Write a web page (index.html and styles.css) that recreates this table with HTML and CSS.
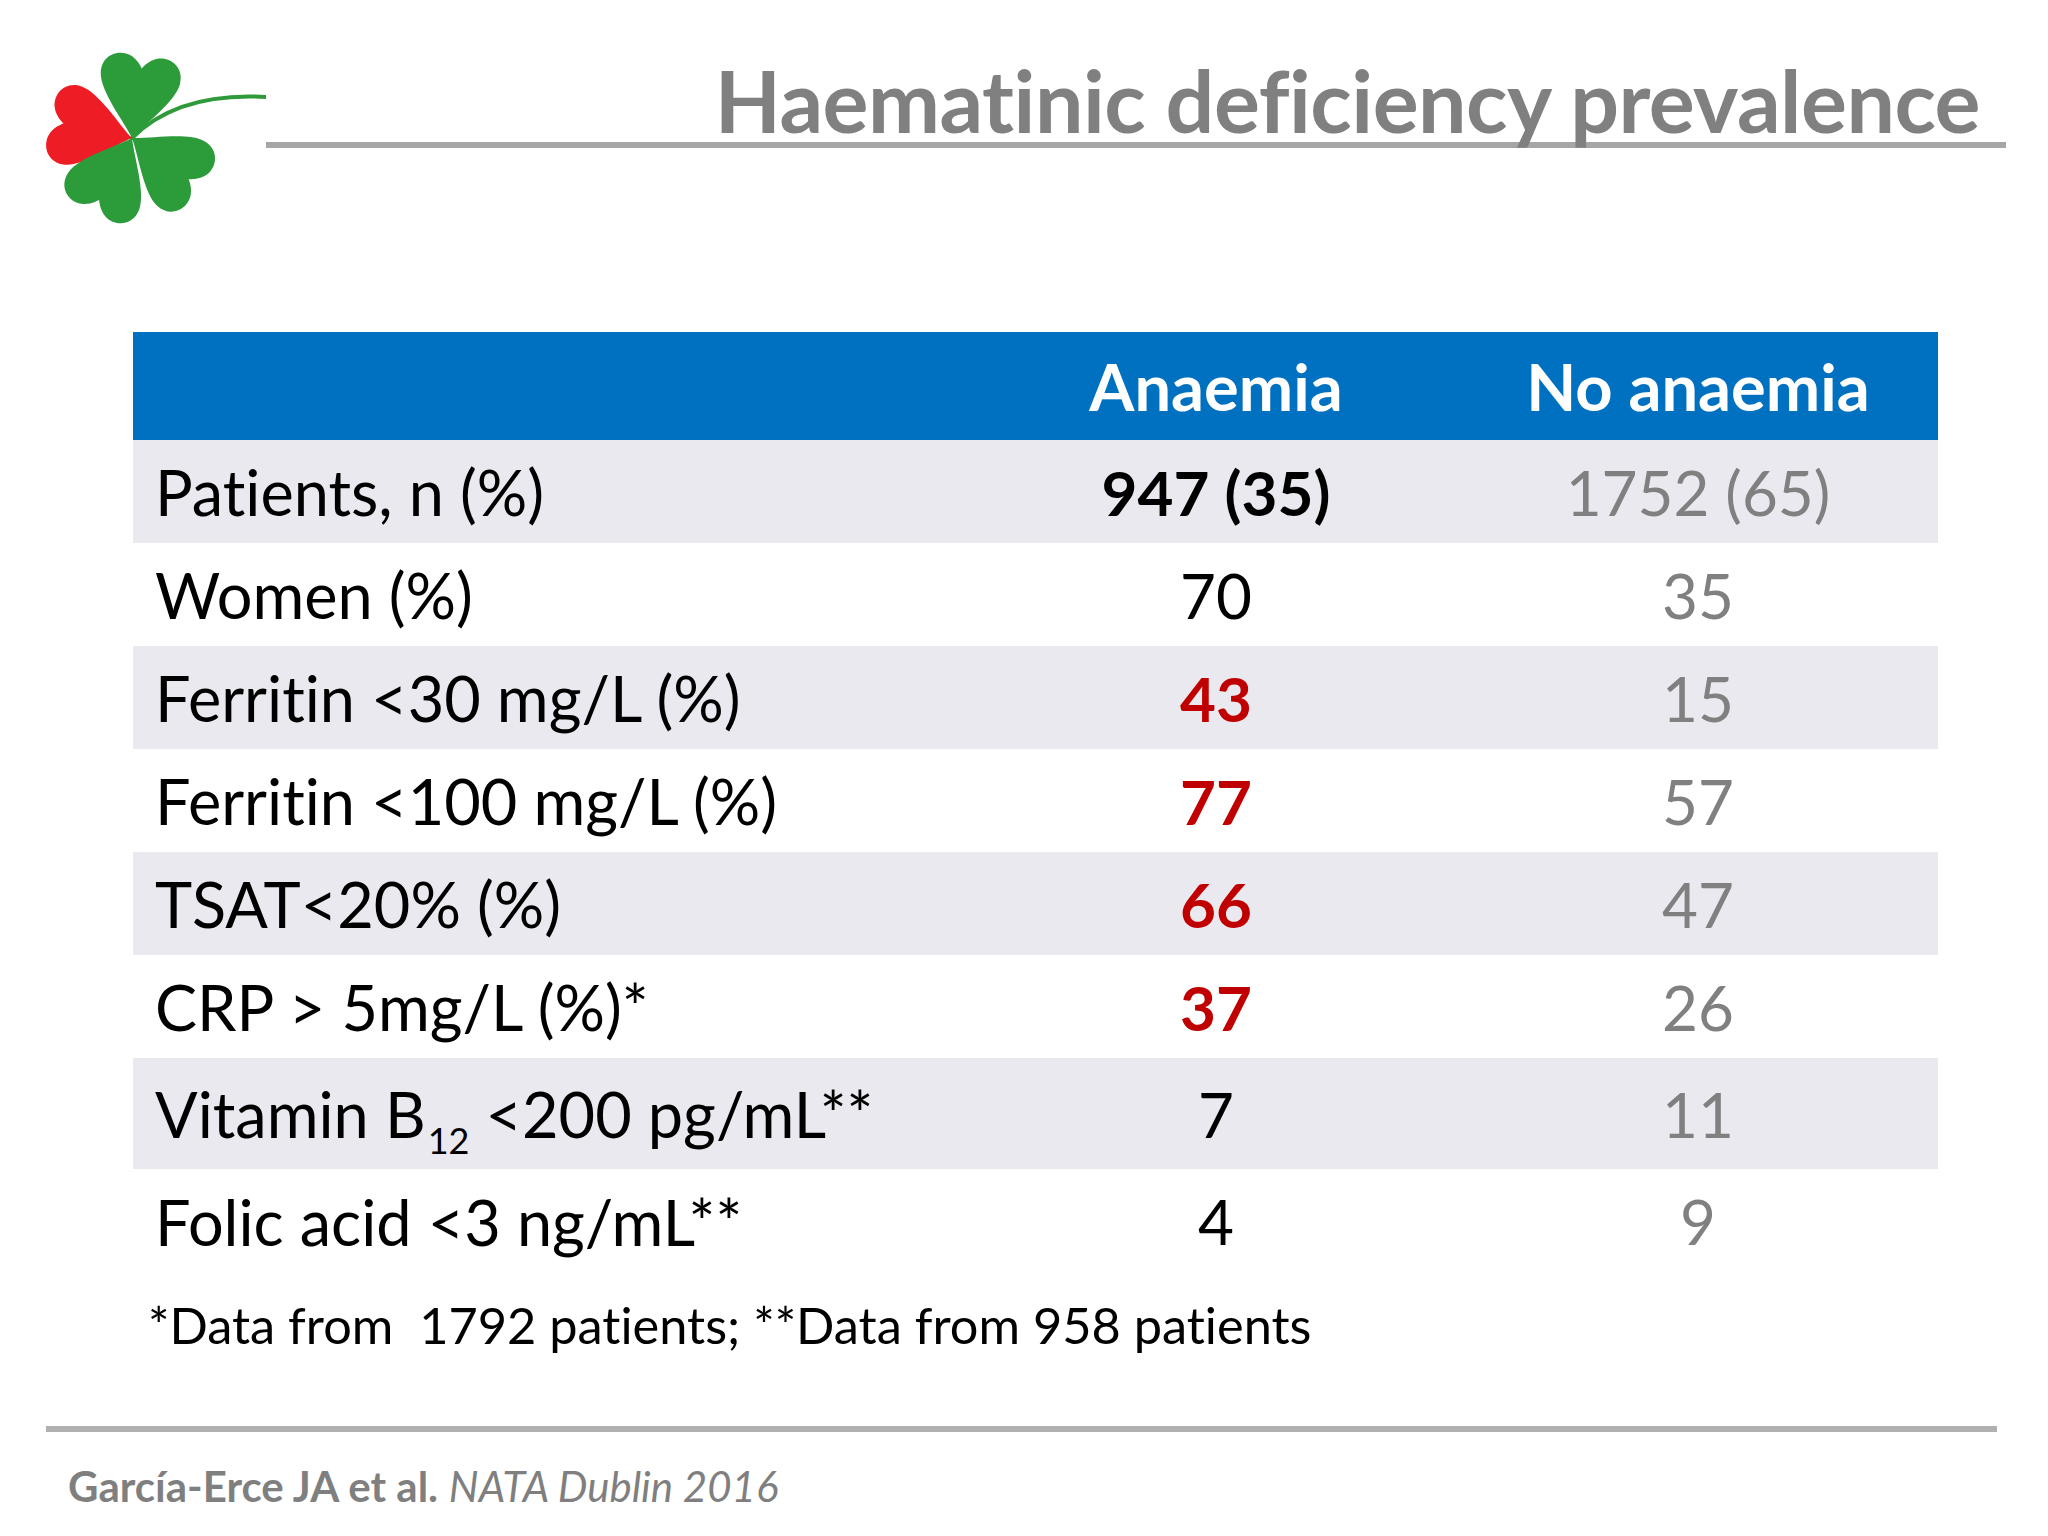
FILE: index.html
```html
<!DOCTYPE html>
<html lang="en">
<head>
<meta charset="utf-8">
<title>Haematinic deficiency prevalence</title>
<link rel="stylesheet" href="styles.css">
</head>
<body>
<div class="slide">
  <header class="top">
    <svg class="logo" width="266" height="240" viewBox="0 0 266 240" aria-label="clover logo">
      <path class="stem" d="M132 138 Q 178 92 266 97" />
      <g transform="translate(132 138)">
        <g transform="rotate(-82)"><path class="leaf green" d="M0 0 C 15 -10, 42 -38, 60 -40 C 78 -42, 86 -26, 82 -14 C 79 -5, 70 0, 70 0 C 70 0, 79 5, 82 14 C 86 26, 78 42, 60 40 C 42 38, 15 10, 0 0 Z"/></g>
        <g transform="rotate(-168)"><path class="leaf red" d="M0 0 C 15 -10, 42 -38, 60 -40 C 78 -42, 86 -26, 82 -14 C 79 -5, 70 0, 70 0 C 70 0, 79 5, 82 14 C 86 26, 78 42, 60 40 C 42 38, 15 10, 0 0 Z"/></g>
        <g transform="rotate(118)"><path class="leaf green" d="M0 0 C 15 -10, 42 -38, 60 -40 C 78 -42, 86 -26, 82 -14 C 79 -5, 70 0, 70 0 C 70 0, 79 5, 82 14 C 86 26, 78 42, 60 40 C 42 38, 15 10, 0 0 Z"/></g>
        <g transform="rotate(36)"><path class="leaf green" d="M0 0 C 15 -10, 42 -38, 60 -40 C 78 -42, 86 -26, 82 -14 C 79 -5, 70 0, 70 0 C 70 0, 79 5, 82 14 C 86 26, 78 42, 60 40 C 42 38, 15 10, 0 0 Z"/></g>
      </g>
    </svg>
    <div class="title-wrap">
      <h1 class="title">Haematinic deficiency prevalence</h1>
    </div>
  </header>

  <table class="data">
    <colgroup>
      <col class="c1"><col class="c2"><col class="c3">
    </colgroup>
    <thead>
      <tr class="head">
        <th></th><th>Anaemia</th><th>No anaemia</th>
      </tr>
    </thead>
    <tbody>
      <tr class="shade">
        <td class="label">Patients, n (%)</td><td class="val bold">947 (35)</td><td class="val grey">1752 (65)</td>
      </tr>
      <tr>
        <td class="label">Women (%)</td><td class="val">70</td><td class="val grey">35</td>
      </tr>
      <tr class="shade">
        <td class="label">Ferritin &lt;30 mg/L (%)</td><td class="val red">43</td><td class="val grey">15</td>
      </tr>
      <tr>
        <td class="label">Ferritin &lt;100 mg/L (%)</td><td class="val red">77</td><td class="val grey">57</td>
      </tr>
      <tr class="shade">
        <td class="label">TSAT&lt;20% (%)</td><td class="val red">66</td><td class="val grey">47</td>
      </tr>
      <tr>
        <td class="label">CRP &gt; 5mg/L (%)*</td><td class="val red">37</td><td class="val grey">26</td>
      </tr>
      <tr class="shade tall">
        <td class="label">Vitamin B<sub>12</sub> &lt;200 pg/mL**</td><td class="val">7</td><td class="val grey">11</td>
      </tr>
      <tr class="last">
        <td class="label">Folic acid &lt;3 ng/mL**</td><td class="val">4</td><td class="val grey">9</td>
      </tr>
    </tbody>
  </table>

  <p class="note">*Data from&nbsp; 1792 patients; **Data from 958 patients</p>

  <footer class="foot">
    <p class="cite"><b>García-Erce JA et al.</b> <i>NATA Dublin 2016</i></p>
  </footer>
</div>
</body>
</html>
```

FILE: styles.css
```css
html, body {
  margin: 0;
  padding: 0;
  background: #ffffff;
}

.slide {
  width: 2048px;
  height: 1536px;
  font-family: "Lato", "Open Sans", sans-serif;
  font-variant-ligatures: none;
  color: #000;
  overflow: hidden;
}

.top {
  display: flex;
  align-items: flex-start;
  height: 332px;
}

.logo {
  flex: 0 0 266px;
  display: block;
}

.stem {
  fill: none;
  stroke: #2e9a3a;
  stroke-width: 4;
  stroke-linecap: round;
}

.leaf.green { fill: #2c9b3a; }
.leaf.red { fill: #ee1c25; }

.title-wrap {
  flex: 1;
  margin-right: 42px;
  padding-top: 58px;
}

.title {
  margin: 0;
  height: 84px;
  line-height: 84px;
  border-bottom: 6px solid #a6a6a6;
  text-align: right;
  padding-right: 26px;
  font-size: 86px;
  font-weight: 700;
  color: #808080;
  letter-spacing: -0.5px;
  white-space: nowrap;
}

.data {
  margin-left: 133px;
  width: 1805px;
  border-collapse: collapse;
  table-layout: fixed;
}

.c1 { width: 841px; }
.c2 { width: 484px; }
.c3 { width: 480px; }

.head {
  background: #0070c0;
  height: 108px;
}

.head th {
  color: #ffffff;
  font-size: 65px;
  font-weight: 700;
  text-align: center;
  padding: 0;
}

.data td {
  padding: 0;
  height: 103px;
  font-size: 62px;
  line-height: 1;
}

.data td.label {
  font-size: 63px;
}

.shade {
  background: #eae9ef;
}

.data .tall td { height: 111px; }
.data .last td { height: 104px; }

.label {
  padding-left: 22px !important;
  white-space: nowrap;
}

.label sub {
  font-size: 36px;
  vertical-align: -16px;
  line-height: 0;
  margin-left: 2px;
}

.val {
  text-align: center;
}

.val.bold { font-weight: 700; }
.val.grey { color: #808080; }
.val.red { color: #c00000; font-weight: 700; }

.note {
  margin: 22px 0 0 148px;
  font-size: 50.5px;
  line-height: 60px;
  white-space: nowrap;
}

.foot {
  margin: 71px 51px 0 46px;
  border-top: 6px solid #b0b0b0;
  padding: 29px 0 0 22px;
}

.cite {
  margin: 0;
  font-size: 42px;
  line-height: 50px;
  color: #7f7f7f;
}

.cite i { font-style: italic; font-weight: 400; }
.cite b { font-weight: 700; }
```
